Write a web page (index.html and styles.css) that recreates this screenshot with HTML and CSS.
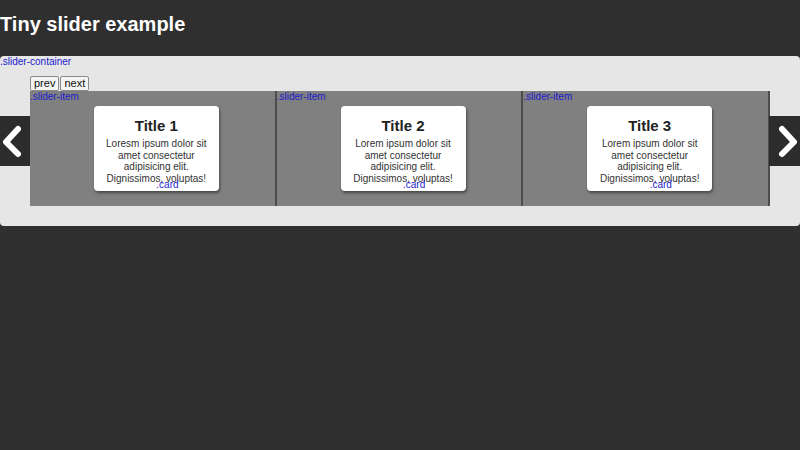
FILE: index.html
```html
<!DOCTYPE html>
<html lang="en">
<head>
    <meta charset="UTF-8">
    <title>Tiny slider example</title>
    <link rel="stylesheet" href="styles.css">
</head>
<body>
    <h1 class="pageTitle">Tiny slider example</h1>
    <div class="sliderContainer">
        <span class="tag">.slider-container</span>
        <div class="controls">
            <button class="ctrl">prev</button>
            <button class="ctrl">next</button>
        </div>
        <div class="track">
            <div class="item">
                <span class="tag">.slider-item</span>
                <div class="card">
                    <h2 class="cardTitle">Title 1</h2>
                    <p class="cardText">Loresm ipsum dolor sit amet consectetur adipisicing elit. Dignissimos, voluptas!</p>
                    <span class="tag cardTag">.card</span>
                </div>
            </div>
            <div class="item">
                <span class="tag">.slider-item</span>
                <div class="card">
                    <h2 class="cardTitle">Title 2</h2>
                    <p class="cardText">Lorem ipsum dolor sit amet consectetur adipisicing elit. Dignissimos, voluptas!</p>
                    <span class="tag cardTag">.card</span>
                </div>
            </div>
            <div class="item">
                <span class="tag">.slider-item</span>
                <div class="card">
                    <h2 class="cardTitle">Title 3</h2>
                    <p class="cardText">Lorem ipsum dolor sit amet consectetur adipisicing elit. Dignissimos, voluptas!</p>
                    <span class="tag cardTag">.card</span>
                </div>
            </div>
        </div>
        <div class="arrow arrowPrev">
            <svg width="30" height="50" viewBox="0 0 30 50">
                <polyline points="18,13 6,26 18,38" fill="none" stroke="#fff" stroke-width="6" stroke-linecap="round" stroke-linejoin="round"/>
            </svg>
        </div>
        <div class="arrow arrowNext">
            <svg width="31" height="50" viewBox="0 0 31 50">
                <polyline points="13,13 25,26 13,38" fill="none" stroke="#fff" stroke-width="6" stroke-linecap="round" stroke-linejoin="round"/>
            </svg>
        </div>
    </div>
</body>
</html>
```

FILE: styles.css
```css
body {
    background-color: #2f2f2f;
    font-family: "Liberation Sans", Arial, sans-serif;
    margin: 0;
}
.pageTitle {
    color: #ffffff;
    font-size: 20px;
    line-height: 23px;
    margin: 13px 0 20px 0;
}
.sliderContainer {
    background-color: #e6e6e6;
    border-radius: 4px;
    padding: 20px 30px;
    position: relative;
}
.tag {
    color: #1c1ccc;
    font-size: 10px;
    left: 0;
    line-height: 12px;
    position: absolute;
    top: 0;
}
.controls {
    display: flex;
    gap: 1px;
    height: 15px;
}
.ctrl {
    background-color: #f4f4f4;
    border: 1px solid #8a8a8a;
    border-radius: 2px;
    color: #111111;
    font-family: inherit;
    font-size: 11px;
    height: 15px;
    line-height: 13px;
    padding: 0 3px;
}
.track {
    background-color: #808080;
    display: flex;
    height: 115px;
}
.item {
    align-items: center;
    border-right: 2px solid #4d4d4d;
    box-sizing: border-box;
    display: flex;
    flex: 1;
    justify-content: center;
    padding-left: 8px;
    position: relative;
}
.card {
    background-color: #ffffff;
    border-radius: 4px;
    box-shadow: 1px 2px 3px rgba(0, 0, 0, 0.45);
    box-sizing: border-box;
    padding: 10px 10px 7px 10px;
    position: relative;
    text-align: center;
    width: 125px;
}
.cardTitle {
    color: #222222;
    font-size: 15px;
    line-height: 20px;
    margin: 0 0 2px 0;
}
.cardText {
    color: #333333;
    font-size: 10px;
    line-height: 11.5px;
    margin: 0;
}
.cardTag {
    bottom: 0;
    left: 50%;
    top: auto;
}
.arrow {
    background-color: #2c2c2c;
    height: 50px;
    position: absolute;
    top: 60px;
}
.arrow svg {
    display: block;
}
.arrowPrev {
    left: 0;
    width: 30px;
}
.arrowNext {
    right: 0;
    width: 31px;
}
```
